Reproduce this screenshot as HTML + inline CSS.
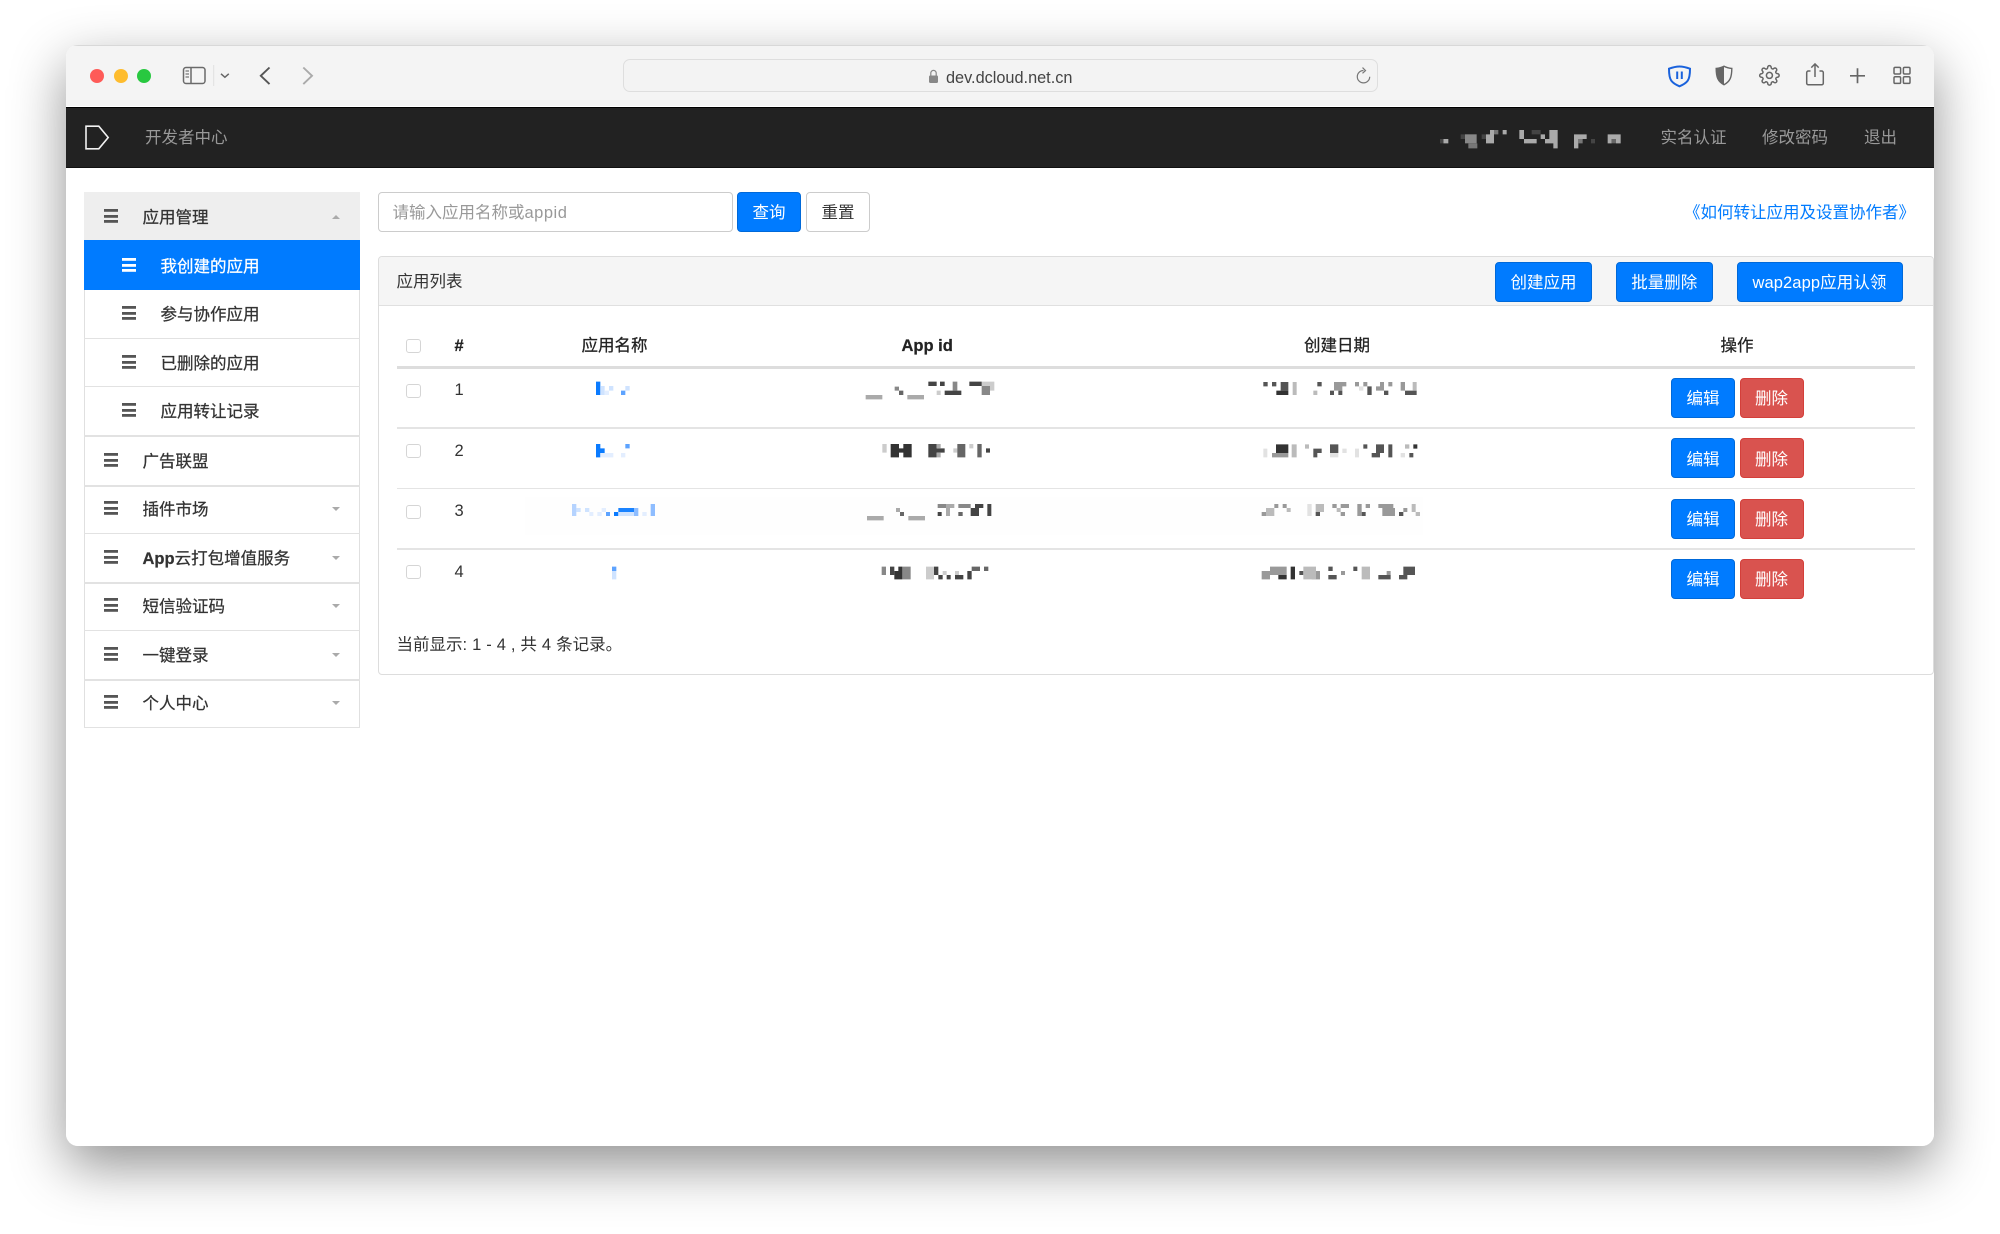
<!DOCTYPE html>
<html lang="zh-CN"><head><meta charset="utf-8"><title>开发者中心</title>
<style>
html,body{margin:0;padding:0;background:#fff;width:2000px;height:1234px;overflow:hidden}
body{font-family:"Liberation Sans","Noto Sans CJK SC",sans-serif;font-size:16.5px;color:#333;position:relative}
#win{position:absolute;left:66px;top:44.5px;width:1868px;height:1101.5px;background:#fff;border-radius:12px;box-shadow:0 20px 55px rgba(0,0,0,.43)}
.a{position:absolute}
.t{position:absolute;line-height:24px;height:24px;white-space:nowrap}
.b{position:absolute;display:flex;align-items:center;justify-content:center;color:#fff;border-radius:4px;box-sizing:border-box;background:#007bff;border:1px solid #0069d9;white-space:nowrap;height:40px;padding-bottom:1.2px}
.d{background:#d9534f;border-color:#d43f3a}
.h{position:absolute;width:14px;height:14px;background:linear-gradient(#555,#555) top/100% 2.8px no-repeat,linear-gradient(#555,#555) center/100% 2.8px no-repeat,linear-gradient(#555,#555) bottom/100% 2.8px no-repeat}
.r{position:absolute;left:84px;width:276px;height:1.4px;background:#e2e2e2}
.l{position:absolute;left:396.5px;width:1518.5px;height:1.5px;background:#e4e4e4}
.c{position:absolute;left:406px;width:14.5px;height:14px;box-sizing:border-box;border:1.3px solid #d5d5d5;border-radius:3px;background:#fff}
.dn{position:absolute;left:332px;width:0;height:0;border-left:4px solid transparent;border-right:4px solid transparent;border-top:4.5px solid #aaa}
.m{margin-top:1px;-webkit-text-stroke:.25px currentColor}
svg{position:absolute;overflow:visible}
</style></head><body>
<div id="win"></div>

<!-- browser chrome -->
<div class="a" style="left:66px;top:44.5px;width:1868px;height:1101.5px;border-radius:12px;overflow:hidden;background:#fff">
<div class="a" style="left:0;top:0;width:1868px;height:61.5px;background:#f4f4f4;border-top:1px solid #d8d8d8;box-sizing:border-box"></div>
<div class="a" style="left:0;top:61.5px;width:1868px;height:1px;background:#fff"></div>
<div class="a" style="left:0;top:62.5px;width:1868px;height:61px;background:#222;border-top:1px solid #000;border-bottom:1px solid #111;box-sizing:border-box"></div>
</div>
<div class="a" style="left:90px;top:68.7px;width:14.4px;height:14.4px;border-radius:50%;background:#fe5b58"></div>
<div class="a" style="left:113.5px;top:68.7px;width:14.4px;height:14.4px;border-radius:50%;background:#febc2e"></div>
<div class="a" style="left:137px;top:68.7px;width:14.4px;height:14.4px;border-radius:50%;background:#28c840"></div>

<div class="a" style="left:622.5px;top:59.3px;width:755.5px;height:32.7px;box-sizing:border-box;border:1.3px solid #dedede;border-radius:7px;background:#f3f3f3"></div>
<div class="t" style="left:946px;top:65.5px;font-size:16.3px;color:#444">dev.dcloud.net.cn</div>

<svg style="left:0;top:0" width="2000" height="120" fill="none">
<rect x="183.5" y="67.5" width="21.5" height="16" rx="2.5" stroke="#6a6a6a" stroke-width="1.5"/>
<path d="M191 67.5v16" stroke="#6a6a6a" stroke-width="1.5"/>
<path d="M185.5 71h3.5M185.5 74h3.5M185.5 77h3.5" stroke="#777" stroke-width="1.2"/>
<path d="M213.7 65v21" stroke="#e0e0e0" stroke-width="1"/>
<path d="M221 73.8l3.9 3.5 3.9-3.5" stroke="#666" stroke-width="1.5"/>
<path d="M269.5 67.5l-8.7 8.3 8.7 8.3" stroke="#555" stroke-width="1.9"/>
<path d="M303.3 67.5l8.7 8.3-8.7 8.3" stroke="#aaa" stroke-width="1.9"/>
<!-- lock -->
<rect x="929" y="75.5" width="9" height="7.5" rx="1.2" fill="#888"/>
<path d="M930.8 75.5v-2.4a2.7 2.7 0 0 1 5.4 0v2.4" stroke="#888" stroke-width="1.2"/>
<!-- reload -->
<path d="M1363.5 71a6.2 6.2 0 1 0 6.2 6.2" stroke="#777" stroke-width="1.2" transform="translate(0 -.5)"/>
<path d="M1362.5 67.6l3 3-3 2.7" stroke="#777" stroke-width="1.2"/>
<!-- bitwarden shield -->
<path d="M1679.5 66.5c3.6 0 7.2 1 10.5 2.2 0 5.4-.4 9.2-2.3 12-1.7 2.4-4.9 4.2-8.2 5.6-3.3-1.4-6.5-3.2-8.2-5.6-1.9-2.8-2.3-6.6-2.3-12 3.3-1.2 6.9-2.2 10.5-2.2z" stroke="#1a62dc" stroke-width="2"/>
<path d="M1677.2 71.5v7.5M1681.8 71.5v7.5" stroke="#1a62dc" stroke-width="2"/>
<!-- half shield -->
<path d="M1724 66.2c2.6 1.4 5.3 2 7.8 2.2 0 8.6-1.6 13-7.8 16.3-6.2-3.3-7.8-7.7-7.8-16.3 2.5-.2 5.2-.8 7.8-2.2z" stroke="#666" stroke-width="1.4"/>
<path d="M1724 66.2v18.5c-6.2-3.3-7.8-7.7-7.8-16.3 2.5-.2 5.2-.8 7.8-2.2z" fill="#666"/>
<!-- gear -->
<g transform="translate(1758.8 64.8) scale(.885)" stroke="#666" stroke-width="1.7">
<circle cx="12" cy="12" r="3.4"/>
<path d="M19.4 15a1.65 1.65 0 0 0 .33 1.82l.06.06a2 2 0 0 1 0 2.83 2 2 0 0 1-2.83 0l-.06-.06a1.65 1.65 0 0 0-1.82-.33 1.65 1.65 0 0 0-1 1.51V21a2 2 0 0 1-2 2 2 2 0 0 1-2-2v-.09A1.65 1.65 0 0 0 9 19.4a1.65 1.65 0 0 0-1.82.33l-.06.06a2 2 0 0 1-2.83 0 2 2 0 0 1 0-2.83l.06-.06a1.65 1.65 0 0 0 .33-1.82 1.65 1.65 0 0 0-1.51-1H3a2 2 0 0 1-2-2 2 2 0 0 1 2-2h.09A1.65 1.65 0 0 0 4.6 9a1.65 1.65 0 0 0-.33-1.82l-.06-.06a2 2 0 0 1 0-2.83 2 2 0 0 1 2.83 0l.06.06a1.65 1.65 0 0 0 1.82.33H9a1.65 1.65 0 0 0 1-1.51V3a2 2 0 0 1 2-2 2 2 0 0 1 2 2v.09a1.65 1.65 0 0 0 1 1.51 1.65 1.65 0 0 0 1.82-.33l.06-.06a2 2 0 0 1 2.83 0 2 2 0 0 1 0 2.83l-.06.06a1.65 1.65 0 0 0-.33 1.82V9a1.65 1.65 0 0 0 1.51 1H21a2 2 0 0 1 2 2 2 2 0 0 1-2 2h-.09a1.65 1.65 0 0 0-1.51 1z"/>
</g>
<!-- share -->
<path d="M1810.5 71h-2.2a1.6 1.6 0 0 0-1.6 1.6v10.6a1.6 1.6 0 0 0 1.6 1.6h13.4a1.6 1.6 0 0 0 1.6-1.6V72.6a1.6 1.6 0 0 0-1.6-1.6h-2.2" stroke="#666" stroke-width="1.5"/>
<path d="M1815 77V64.3M1811.3 67.6l3.7-3.7 3.7 3.7" stroke="#666" stroke-width="1.5"/>
<!-- plus -->
<path d="M1857.5 68.3v15M1850 75.8h15" stroke="#666" stroke-width="1.7"/>
<!-- grid -->
<g stroke="#666" stroke-width="1.5"><rect x="1894" y="67.4" width="6.6" height="6.6" rx="1.2"/><rect x="1903.4" y="67.4" width="6.6" height="6.6" rx="1.2"/><rect x="1894" y="76.8" width="6.6" height="6.6" rx="1.2"/><rect x="1903.4" y="76.8" width="6.6" height="6.6" rx="1.2"/></g>
<!-- dcloud logo -->
<path d="M86 126.2h12.8l9.4 11.3-9.4 11.3H86z" stroke="#f2f2f2" stroke-width="1.6"/>
</svg>

<!-- nav text -->
<div class="t" style="left:145px;top:126px;color:#999">开发者中心</div>
<div class="t" style="left:1660.5px;top:126px;color:#999">实名认证</div>
<div class="t" style="left:1762px;top:126px;color:#999">修改密码</div>
<div class="t" style="left:1864px;top:126px;color:#999">退出</div>
<svg style="left:1430px;top:120px" width="200" height="40" viewBox="0 0 600 120">
<path fill="#aaa" d="M40 57h15v13H40zM168 43h24v27h-24zM180 30h12v13h-12zM218 30h12v13h-12zM268 30h14v27h-14zM282 57h38v13h-38zM332 43h13v14h-13zM345 57h25v13h-25zM370 30h13v55h-13zM358 30h12v27h-12zM432 43h13v42h-13zM445 43h25v14h-25zM533 43h39v14h-39zM533 57h12v13h-12zM558 57h14v13h-14z"/>
<path fill="#888" d="M105 43h35v27h-35z"/>
<path fill="#777" d="M115 70h27v15h-27zM192 30h13v13h-13zM445 57h13v13h-13z"/>
<path fill="#666" d="M545 57h13v13h-13z"/>
<path fill="#444" d="M30 57h10v13H30zM92 43h13v14H92zM155 43h13v14h-13zM305 30h27v13h-27zM483 57h12v13h-12z"/>
</svg>

<!-- sidebar -->
<div class="a" style="left:84px;top:192px;width:276px;height:48px;background:#eee"></div>
<div class="a" style="left:84px;top:240px;width:276px;height:50px;background:#007bff"></div>
<div class="a" style="left:84px;top:290px;width:1.4px;height:438px;background:#e0e0e0"></div>
<div class="a" style="left:358.8px;top:290px;width:1.4px;height:438px;background:#e0e0e0"></div>
<div class="r" style="top:337.5px"></div><div class="r" style="top:386px"></div><div class="r" style="top:434.5px;height:2.2px"></div><div class="r" style="top:484.5px;height:2px"></div><div class="r" style="top:533px"></div><div class="r" style="top:581.5px;height:2px"></div><div class="r" style="top:630px"></div><div class="r" style="top:678.5px;height:2px"></div><div class="r" style="top:727px"></div>

<div class="h" style="left:104px;top:209px"></div><div class="t m" style="left:142.5px;top:205px">应用管理</div>
<div class="a" style="left:332px;top:214.5px;width:0;height:0;border-left:4px solid transparent;border-right:4px solid transparent;border-bottom:4.5px solid #aaa"></div>
<div class="h" style="left:122px;top:258px;background:linear-gradient(#fff,#fff) top/100% 2.8px no-repeat,linear-gradient(#fff,#fff) center/100% 2.8px no-repeat,linear-gradient(#fff,#fff) bottom/100% 2.8px no-repeat"></div><div class="t m" style="left:160.5px;top:253.5px;color:#fff">我创建的应用</div>
<div class="h" style="left:122px;top:306px"></div><div class="t m" style="left:160.5px;top:302px">参与协作应用</div>
<div class="h" style="left:122px;top:355px"></div><div class="t m" style="left:160.5px;top:350.5px">已删除的应用</div>
<div class="h" style="left:122px;top:403px"></div><div class="t m" style="left:160.5px;top:399px">应用转让记录</div>
<div class="h" style="left:104px;top:453px"></div><div class="t m" style="left:142.5px;top:448.5px">广告联盟</div>
<div class="h" style="left:104px;top:501px"></div><div class="t m" style="left:142.5px;top:497px">插件市场</div><div class="dn" style="top:507px"></div>
<div class="h" style="left:104px;top:550px"></div><div class="t m" style="left:142.5px;top:545.5px"><b>App</b>云打包增值服务</div><div class="dn" style="top:555.5px"></div>
<div class="h" style="left:104px;top:598px"></div><div class="t m" style="left:142.5px;top:594px">短信验证码</div><div class="dn" style="top:604px"></div>
<div class="h" style="left:104px;top:647px"></div><div class="t m" style="left:142.5px;top:642.5px">一键登录</div><div class="dn" style="top:652.5px"></div>
<div class="h" style="left:104px;top:695px"></div><div class="t m" style="left:142.5px;top:691px">个人中心</div><div class="dn" style="top:701px"></div>

<!-- search -->
<div class="a" style="left:378px;top:192px;width:355px;height:40px;box-sizing:border-box;border:1.3px solid #ccc;border-radius:4px;background:#fff"></div>
<div class="t" style="left:392.5px;top:201px;color:#999;">请输入应用名称或<span style="letter-spacing:.5px">appid</span></div>
<div class="b" style="left:737px;top:192px;width:64px">查询</div>
<div class="b" style="left:806px;top:192px;width:64px;background:#fff;border-color:#ccc;color:#333">重置</div>
<div class="t" style="left:1684px;top:201px;color:#007bff">《如何转让应用及设置协作者》</div>

<!-- card -->
<div class="a" style="left:378px;top:256px;width:1556px;height:418.5px;box-sizing:border-box;border:1.3px solid #ddd;border-radius:4px;background:#fff"></div>
<div class="a" style="left:379.3px;top:257.3px;width:1554px;height:47.7px;background:#f5f5f5;border-bottom:1.4px solid #e0e0e0;border-radius:3px 3px 0 0"></div>
<div class="t" style="left:396.5px;top:269.5px">应用列表</div>
<div class="b" style="left:1495px;top:261.7px;width:97px">创建应用</div>
<div class="b" style="left:1616px;top:261.7px;width:96.5px">批量删除</div>
<div class="b" style="left:1736.5px;top:261.7px;width:166px;letter-spacing:.1px">wap2app应用认领</div>

<!-- table -->
<div class="a" style="left:525px;top:497px;width:898px;height:38px;background:#fefefe"></div>
<div class="c" style="top:338.7px"></div>
<div class="t m" style="left:454.5px;top:333px;color:#222"><b>#</b></div>
<div class="t m" style="left:581.5px;top:333px;color:#222">应用名称</div>
<div class="t m" style="left:901.5px;top:333px;color:#222"><b>App id</b></div>
<div class="t m" style="left:1304px;top:333px;color:#222">创建日期</div>
<div class="t m" style="left:1720.5px;top:333px;color:#222">操作</div>
<div class="l" style="top:366px;height:2.6px;background:#ddd"></div>
<div class="l" style="top:427px"></div><div class="l" style="top:487.5px"></div><div class="l" style="top:548px"></div>

<div class="c" style="top:384px"></div><div class="t" style="left:454.5px;top:378px">1</div>
<div class="c" style="top:444px"></div><div class="t" style="left:454.5px;top:439px">2</div>
<div class="c" style="top:504.7px"></div><div class="t" style="left:454.5px;top:499px">3</div>
<div class="c" style="top:565px"></div><div class="t" style="left:454.5px;top:559.5px">4</div>

<svg style="left:560px;top:370px" width="110" height="220" viewBox="0 0 330 660">
<path fill="#0a7bff" d="M108 35h13v40h-13zM108 222h13v40h-13zM121 235h13v14h-13zM162 426h13v12h-13z"/>
<path fill="#1a83ff" d="M175 414h47v12h-47z"/>
<path fill="#cfe3ff" d="M121 48h13v27h-13zM147 48h13v14h-13zM196 48h13v14h-13zM49 414h13v12H49zM75 414h13v12H75zM175 426h47v12h-47zM156 603h13v25h-13z"/>
<path fill="#e3eeff" d="M134 62h13v13h-13zM121 249h39v13h-39zM183 249h13v13h-13zM88 426h12v12H88zM112 426h13v12h-13zM125 414h13v12h-13zM247 426h13v12h-13z"/>
<path fill="#5da3ff" d="M183 62h13v13h-13zM196 222h13v13h-13zM138 426h12v12h-12zM156 590h13v13h-13z"/>
<path fill="#8ebdff" d="M222 414h13v24h-13zM272 402h13v36h-13z"/>
<path fill="#b5d3ff" d="M36 402h13v36H36z"/>
</svg>

<svg style="left:860px;top:370px" width="140" height="220" viewBox="0 0 420 660">
<path fill="#aaa" d="M17 75h50v13H17zM142 75h50v13h-50zM21 438h50v13H21zM145 438h50v13h-50zM258 402h25v12h-25zM258 414h12v24h-12zM108 414h12v12h-12z"/>
<path fill="#ccc" d="M230 62h12v13h-12zM365 35h25v13h-25zM390 35h13v27h-13zM67 222h13v26H67zM280 235h12v13h-12zM328 222h12v13h-12zM198 590h24v38h-24zM248 603h12v12h-12zM285 603h12v12h-12z"/>
<path fill="#888" d="M104 50h13v12h-13zM278 35h14v27h-14zM365 48h25v27h-25zM233 402h25v12h-25zM295 402h37v12h-37zM65 590h13v25H65zM127 590h25v38h-25z"/>
<path fill="#666" d="M117 62h13v13h-13zM292 222h24v40h-24zM352 222h13v40h-13zM120 426h12v12h-12zM295 426h13v12h-13zM335 590h12v13h-12zM347 590h13v13h-13zM372 590h13v13h-13z"/>
<path fill="#444" d="M205 35h25v13h-25zM240 35h14v13h-14zM254 62h50v13h-50zM328 35h37v13h-37zM205 222h25v40h-25zM230 235h24v13h-24zM378 235h12v13h-12zM233 426h12v12h-12zM332 414h25v24h-25zM345 402h25v12h-25zM382 402h12v36h-12zM90 590h13v25H90zM222 590h13v25h-13zM235 615h13v13h-13zM260 615h12v13h-12zM285 615h25v13h-25zM322 603h13v25h-13z"/>
<path fill="#333" d="M92 222h25v40H92zM130 222h25v40h-25zM117 235h13v13h-13zM103 603h12v25h-12zM115 590h12v38h-12z"/>
<path fill="#aaa" d="M230 222h12v13h-12zM230 248h12v14h-12z"/>
</svg>

<svg style="left:1260px;top:370px" width="170" height="220" viewBox="0 0 510 660">
<path fill="#333" d="M49 62h36v13H49zM48 223h37v26H48zM460 223h12v13h-12zM92 590h13v38H92zM55 615h25v13H55z"/>
<path fill="#555" d="M10 36h13v13H10zM36 36h13v13H36zM62 36h23v26H62zM172 36h13v13h-13zM210 62h12v13h-12zM235 62h12v13h-12zM322 49h13v26h-13zM372 62h13v13h-13zM435 62h35v13h-35zM160 236h25v13h-25zM160 249h12v13h-12zM210 223h25v26h-25zM310 223h12v13h-12zM335 249h25v13h-25zM348 223h24v26h-24zM385 223h12v39h-12zM448 249h12v13h-12zM167 426h13v12h-13zM305 426h12v12h-12zM417 426h13v12h-13zM205 590h13v13h-13zM205 615h25v13h-25zM280 590h12v13h-12zM355 615h37v13h-37zM417 615h25v13h-25zM430 590h35v25h-35zM118 603h12v12h-12z"/>
<path fill="#999" d="M222 36h25v26h-25zM247 36h12v13h-12zM285 36h12v13h-12zM310 36h12v13h-12zM348 49h24v13h-24zM360 36h12v13h-12zM385 36h12v13h-12zM422 36h13v26h-13zM36 249h24v13H36zM60 249h25v13H60zM5 426h13v12H5zM43 402h12v12H43zM68 402h12v12H68zM217 402h13v12h-13zM242 402h25v12h-25zM242 426h13v12h-13zM292 402h13v36h-13zM317 402h13v12h-13zM355 402h45v12h-45zM367 414h38v24h-38zM430 414h12v12h-12zM30 590h50v25H30zM5 603h25v25H5zM155 603h25v25h-25zM243 603h12v12h-12zM380 603h12v12h-12z"/>
<path fill="#bbb" d="M98 36h12v39H98zM160 62h12v13h-12zM458 36h12v26h-12zM95 223h15v39H95zM135 223h12v13h-12zM435 223h13v13h-13zM18 414h25v24H18zM80 414h12v12H80zM167 402h25v24h-25zM230 414h12v12h-12zM455 402h12v24h-12zM467 426h13v12h-13zM130 590h38v38h-38zM305 590h25v38h-25z"/>
<path fill="#e2e2e2" d="M297 49h13v13h-13zM10 236h12v26H10zM210 249h25v13h-25zM247 236h13v13h-13zM285 236h12v26h-12zM422 249h13v13h-13zM142 402h13v36h-13z"/>
</svg>

<div class="b" style="left:1671px;top:378px;width:64px">编辑</div><div class="b d" style="left:1739.5px;top:378px;width:64px">删除</div>
<div class="b" style="left:1671px;top:438.3px;width:64px">编辑</div><div class="b d" style="left:1739.5px;top:438.3px;width:64px">删除</div>
<div class="b" style="left:1671px;top:498.7px;width:64px">编辑</div><div class="b d" style="left:1739.5px;top:498.7px;width:64px">删除</div>
<div class="b" style="left:1671px;top:559px;width:64px">编辑</div><div class="b d" style="left:1739.5px;top:559px;width:64px">删除</div>

<div class="t" style="left:396.5px;top:632.5px;word-spacing:.4px">当前显示: 1 - 4 , 共 4 条记录。</div>
</body></html>
